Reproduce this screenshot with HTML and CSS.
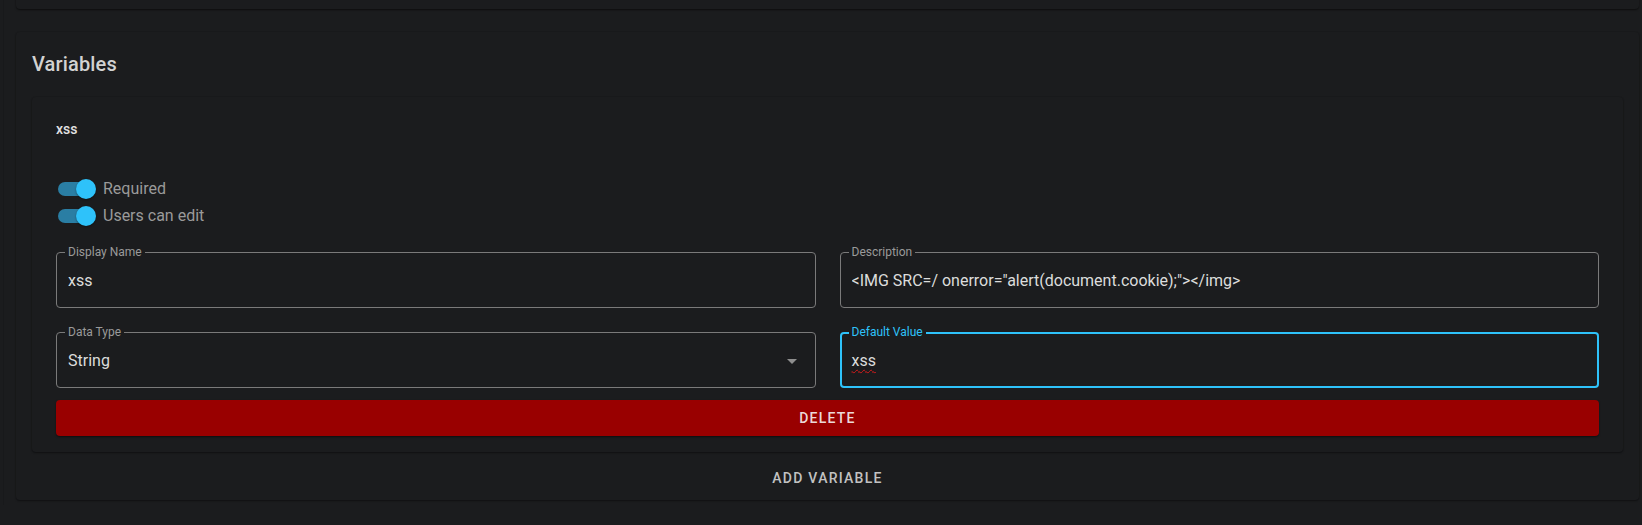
FILE: index.html
```html
<!DOCTYPE html>
<html lang="en">
<head>
<meta charset="utf-8">
<title>Variables</title>
<link rel="stylesheet" href="styles.css">
</head>
<body>
<div class="page">
  <div class="top-card"></div>
  <section class="card main-card">
    <h2 class="heading">Variables</h2>
    <div class="card var-card">
      <div class="var-title">xss</div>
      <div class="toggles">
        <label class="toggle-row">
          <span class="switch"><span class="track"></span><span class="thumb"></span></span>
          <span class="toggle-label">Required</span>
        </label>
        <label class="toggle-row">
          <span class="switch"><span class="track"></span><span class="thumb"></span></span>
          <span class="toggle-label">Users can edit</span>
        </label>
      </div>
      <div class="fields">
        <div class="field">
          <span class="field-label">Display Name</span>
          <input class="field-input" type="text" value="xss" readonly>
        </div>
        <div class="field">
          <span class="field-label">Description</span>
          <input class="field-input" type="text" value="&lt;IMG SRC=/ onerror=&quot;alert(document.cookie);&quot;&gt;&lt;/img&gt;" readonly>
        </div>
        <div class="field">
          <span class="field-label">Data Type</span>
          <div class="field-input select">String</div>
          <svg class="arrow" viewBox="0 0 24 24" width="24" height="24"><path d="M7 10l5 5 5-5z"/></svg>
        </div>
        <div class="field focused">
          <span class="field-label">Default Value</span>
          <div class="field-input"><span class="misspelled">xss</span></div>
        </div>
      </div>
      <button class="btn-delete" type="button">Delete</button>
    </div>
    <button class="btn-add" type="button">Add Variable</button>
  </section>
</div>
</body>
</html>
```
FILE: styles.css
```css
* { box-sizing: border-box; }
html, body { margin: 0; padding: 0; }
body {
  background: #1b1c1e;
  font-family: Roboto, "Liberation Sans", Arial, sans-serif;
  color: #e0e0e0;
  height: 525px;
  overflow: hidden;
}
.page {
  margin-left: 3px;
  border-left: 1px solid #18191b;
  padding: 0 3px 0 12px;
  min-height: 525px;
}
.card {
  background: #1b1c1e;
  border-radius: 4px;
  box-shadow: 0 0 0 1px rgba(0,0,0,0.04), 0 1px 2px rgba(0,0,0,0.4);
}
.top-card {
  height: 29px;
  margin-top: -20px;
  background: #1b1c1e;
  border-radius: 4px;
  box-shadow: 0 1px 2px rgba(0,0,0,0.55);
}
.main-card {
  margin-top: 23px;
  padding: 16px 16px 4px;
  height: 468px;
}
.heading {
  margin: 0 0 17px;
  font-size: 20px;
  line-height: 32px;
  font-weight: 500;
  color: #d2d2d2;
  letter-spacing: 0.15px;
}
.var-card {
  padding: 22px 24px 16px;
}
.var-title {
  font-size: 14px;
  line-height: 20px;
  font-weight: 500;
  color: #e2e2e2;
}
.toggles {
  margin-top: 36px;
  display: flex;
  flex-direction: column;
}
.toggle-row {
  display: flex;
  align-items: center;
  height: 27px;
}
.switch {
  position: relative;
  width: 45px;
  height: 27px;
  margin-left: 2px;
  flex: none;
}
.track {
  position: absolute;
  left: 0;
  top: 7px;
  width: 34px;
  height: 14px;
  border-radius: 7px;
  background: #2a7ea4;
}
.thumb {
  position: absolute;
  left: 18px;
  top: 4px;
  width: 20px;
  height: 20px;
  border-radius: 50%;
  background: #2ec2fa;
  box-shadow: 0 1px 2px rgba(0,0,0,0.4);
}
.toggle-label {
  font-size: 16px;
  line-height: 24px;
  color: #9a9a9a;
}
.fields {
  margin-top: 23px;
  display: grid;
  grid-template-columns: 1fr 1fr;
  column-gap: 24px;
  row-gap: 24px;
}
.field {
  position: relative;
  height: 56px;
  border: 1px solid #7a7a7a;
  border-radius: 4px;
  display: flex;
  align-items: center;
}
.field.focused {
  border: 2px solid #2ec2fa;
}
.field-label {
  position: absolute;
  top: -9px;
  left: 8px;
  padding: 0 3px;
  background: #1b1c1e;
  font-size: 12px;
  line-height: 16px;
  color: #9a9a9a;
}
.field.focused .field-label {
  top: -10px;
  left: 7px;
  color: #2ec2fa;
}
.field-input {
  width: 100%;
  background: transparent;
  border: 0;
  outline: none;
  padding: 0 11px;
  font-family: inherit;
  font-size: 16px;
  line-height: 23px;
  color: #dcdcdc;
}
.field.focused .field-input { padding: 0 10px; }
.misspelled {
  text-decoration: underline wavy #d41a1a;
  text-decoration-thickness: 1px;
  text-underline-offset: 3px;
}
.arrow {
  position: absolute;
  right: 11px;
  top: 16px;
  fill: #8e8e8e;
}
.btn-delete {
  display: block;
  width: 100%;
  height: 36px;
  margin-top: 12px;
  border: 0;
  border-radius: 4px;
  background: #990000;
  color: #ecd9d9;
  font-family: inherit;
  font-size: 14px;
  font-weight: 500;
  letter-spacing: 1.25px;
  text-transform: uppercase;
  box-shadow: 0 1px 2px rgba(0,0,0,0.5);
}
.btn-add {
  display: block;
  width: 100%;
  height: 36px;
  margin-top: 8px;
  border: 0;
  background: transparent;
  color: #c2c2c2;
  font-family: inherit;
  font-size: 14px;
  font-weight: 500;
  letter-spacing: 1.25px;
  text-transform: uppercase;
}
```
